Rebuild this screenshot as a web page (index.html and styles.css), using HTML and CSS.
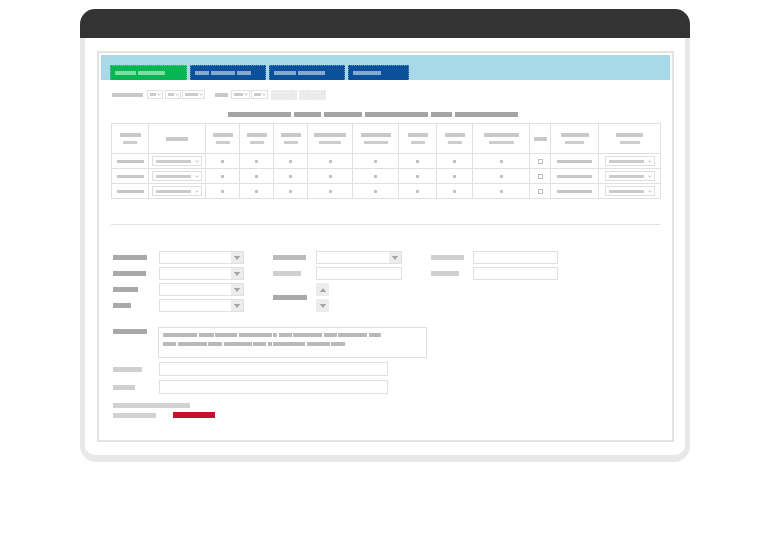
FILE: index.html
```html
<!DOCTYPE html>
<html lang="en">
<head>
<meta charset="utf-8">
<title>Wireframe</title>
<link rel="stylesheet" href="styles.css">
</head>
<body>
<div class="device">
  <div class="device-top"></div>
  <div class="device-body">
    <div class="panel">
      <div class="tabstrip">
        <div class="tab tab-green t1"><span class="tb" style="width:21px"></span><span class="tb" style="width:27px"></span></div>
        <div class="tab tab-blue t2"><span class="tb" style="width:14px"></span><span class="tb" style="width:24px"></span><span class="tb" style="width:14px"></span></div>
        <div class="tab tab-blue t3"><span class="tb" style="width:22px"></span><span class="tb" style="width:27px"></span></div>
        <div class="tab tab-blue t4"><span class="tb" style="width:28px"></span></div>
      </div>

      <div class="content">
        <div class="filters">
          <span class="bar fbar" style="width:31px"></span>
          <span class="msel ms-a" style="width:16px"><span class="mb"></span><svg class="chev" viewBox="0 0 4 3"><polyline points="0.5,0.5 2,2.3 3.5,0.5"/></svg></span>
          <span class="msel ms-b" style="width:16px"><span class="mb"></span><svg class="chev" viewBox="0 0 4 3"><polyline points="0.5,0.5 2,2.3 3.5,0.5"/></svg></span>
          <span class="msel ms-c" style="width:23px"><span class="mb"></span><svg class="chev" viewBox="0 0 4 3"><polyline points="0.5,0.5 2,2.3 3.5,0.5"/></svg></span>
          <span class="bar fbar fgap" style="width:13px"></span>
          <span class="msel ms-b2" style="width:19px"><span class="mb"></span><svg class="chev" viewBox="0 0 4 3"><polyline points="0.5,0.5 2,2.3 3.5,0.5"/></svg></span>
          <span class="msel ms-c" style="width:17px"><span class="mb"></span><svg class="chev" viewBox="0 0 4 3"><polyline points="0.5,0.5 2,2.3 3.5,0.5"/></svg></span>
          <span class="fbtn fb-a" style="width:26px"></span>
          <span class="fbtn fb-b" style="width:27px"></span>
        </div>

        <div class="titles">
          <span class="tbar" style="width:63px"></span>
          <span class="tbar" style="width:27px"></span>
          <span class="tbar" style="width:38px"></span>
          <span class="tbar" style="width:63px"></span>
          <span class="tbar" style="width:21px"></span>
          <span class="tbar" style="width:63px"></span>
        </div>

        <table class="grid">
          <colgroup>
            <col class="k1"><col class="k2"><col class="k3"><col class="k3"><col class="k3"><col class="k6"><col class="k7"><col class="k8"><col class="k9"><col class="k10"><col class="k11"><col class="k12"><col class="k13">
          </colgroup>
          <thead>
            <tr>
              <th><div class="hd"><span class="h1" style="width:21px"></span><span class="h2" style="width:14px"></span></div></th>
              <th><div class="hd"><span class="h1" style="width:22px"></span></div></th>
              <th><div class="hd"><span class="h1" style="width:20px"></span><span class="h2" style="width:14px"></span></div></th>
              <th><div class="hd"><span class="h1" style="width:20px"></span><span class="h2" style="width:14px"></span></div></th>
              <th><div class="hd"><span class="h1" style="width:20px"></span><span class="h2" style="width:14px"></span></div></th>
              <th><div class="hd"><span class="h1" style="width:32px"></span><span class="h2" style="width:22px"></span></div></th>
              <th><div class="hd"><span class="h1" style="width:30px"></span><span class="h2" style="width:24px"></span></div></th>
              <th><div class="hd"><span class="h1" style="width:20px"></span><span class="h2" style="width:14px"></span></div></th>
              <th><div class="hd"><span class="h1" style="width:20px"></span><span class="h2" style="width:14px"></span></div></th>
              <th><div class="hd"><span class="h1" style="width:35px"></span><span class="h2" style="width:25px"></span></div></th>
              <th><div class="hd"><span class="h1" style="width:13px"></span></div></th>
              <th><div class="hd"><span class="h1" style="width:28px"></span><span class="h2" style="width:19px"></span></div></th>
              <th><div class="hd"><span class="h1" style="width:27px"></span><span class="h2" style="width:20px"></span></div></th>
            </tr>
          </thead>
          <tbody>
            <tr>
              <td><span class="rbar"></span></td>
              <td><span class="tsel"><span class="mb"></span><svg class="chev" viewBox="0 0 4 3"><polyline points="0.5,0.5 2,2.3 3.5,0.5"/></svg></span></td>
              <td><span class="dot"></span></td><td><span class="dot"></span></td><td><span class="dot"></span></td><td><span class="dot"></span></td><td><span class="dot"></span></td><td><span class="dot"></span></td><td><span class="dot"></span></td><td><span class="dot"></span></td>
              <td><span class="chk"></span></td>
              <td><span class="rbar rbar-w"></span></td>
              <td><span class="tsel"><span class="mb"></span><svg class="chev" viewBox="0 0 4 3"><polyline points="0.5,0.5 2,2.3 3.5,0.5"/></svg></span></td>
            </tr>
            <tr>
              <td><span class="rbar"></span></td>
              <td><span class="tsel"><span class="mb"></span><svg class="chev" viewBox="0 0 4 3"><polyline points="0.5,0.5 2,2.3 3.5,0.5"/></svg></span></td>
              <td><span class="dot"></span></td><td><span class="dot"></span></td><td><span class="dot"></span></td><td><span class="dot"></span></td><td><span class="dot"></span></td><td><span class="dot"></span></td><td><span class="dot"></span></td><td><span class="dot"></span></td>
              <td><span class="chk"></span></td>
              <td><span class="rbar rbar-w"></span></td>
              <td><span class="tsel"><span class="mb"></span><svg class="chev" viewBox="0 0 4 3"><polyline points="0.5,0.5 2,2.3 3.5,0.5"/></svg></span></td>
            </tr>
            <tr>
              <td><span class="rbar"></span></td>
              <td><span class="tsel"><span class="mb"></span><svg class="chev" viewBox="0 0 4 3"><polyline points="0.5,0.5 2,2.3 3.5,0.5"/></svg></span></td>
              <td><span class="dot"></span></td><td><span class="dot"></span></td><td><span class="dot"></span></td><td><span class="dot"></span></td><td><span class="dot"></span></td><td><span class="dot"></span></td><td><span class="dot"></span></td><td><span class="dot"></span></td>
              <td><span class="chk"></span></td>
              <td><span class="rbar rbar-w"></span></td>
              <td><span class="tsel"><span class="mb"></span><svg class="chev" viewBox="0 0 4 3"><polyline points="0.5,0.5 2,2.3 3.5,0.5"/></svg></span></td>
            </tr>
          </tbody>
        </table>

        <div class="divider"></div>

        <div class="form">
          <div class="fcol fc1">
            <span class="fl dark" style="width:34px"></span>
            <span class="sel"><span class="arr"><svg viewBox="0 0 6 4"><polygon points="0,0 6,0 3,4"/></svg></span></span>
            <span class="fl dark" style="width:33px"></span>
            <span class="sel"><span class="arr"><svg viewBox="0 0 6 4"><polygon points="0,0 6,0 3,4"/></svg></span></span>
            <span class="fl dark" style="width:25px"></span>
            <span class="sel"><span class="arr"><svg viewBox="0 0 6 4"><polygon points="0,0 6,0 3,4"/></svg></span></span>
            <span class="fl dark" style="width:18px"></span>
            <span class="sel"><span class="arr"><svg viewBox="0 0 6 4"><polygon points="0,0 6,0 3,4"/></svg></span></span>
          </div>
          <div class="fcol fc2">
            <span class="fl mid" style="width:33px"></span>
            <span class="sel"><span class="arr"><svg viewBox="0 0 6 4"><polygon points="0,0 6,0 3,4"/></svg></span></span>
            <span class="fl light" style="width:28px"></span>
            <span class="inp"></span>
            <span class="fl dark span2" style="width:34px"></span>
            <span class="spin"><svg viewBox="0 0 6 4"><polygon points="0,4 6,4 3,0"/></svg></span>
            <span class="spin"><svg viewBox="0 0 6 4"><polygon points="0,0 6,0 3,4"/></svg></span>
          </div>
          <div class="fcol fc3">
            <span class="fl light" style="width:33px"></span>
            <span class="inp"></span>
            <span class="fl light" style="width:28px"></span>
            <span class="inp"></span>
          </div>
        </div>

        <div class="trow">
          <span class="fl dark tlabel" style="width:34px"></span>
          <div class="textarea">
            <div class="tline">
              <span class="tx" style="width:34px"></span><span class="tx" style="width:15px"></span><span class="tx" style="width:22px"></span><span class="tx" style="width:33px"></span><span class="tx" style="width:4px"></span><span class="tx" style="width:13px"></span><span class="tx" style="width:29px"></span><span class="tx" style="width:13px"></span><span class="tx" style="width:29px"></span><span class="tx" style="width:12px"></span>
            </div>
            <div class="tline">
              <span class="tx" style="width:13px"></span><span class="tx" style="width:29px"></span><span class="tx" style="width:14px"></span><span class="tx" style="width:28px"></span><span class="tx" style="width:13px"></span><span class="tx" style="width:4px"></span><span class="tx" style="width:32px"></span><span class="tx" style="width:23px"></span><span class="tx" style="width:14px"></span>
            </div>
          </div>
        </div>

        <div class="irow">
          <span class="fl light" style="width:29px"></span>
          <span class="inp wide"></span>
        </div>
        <div class="irow">
          <span class="fl light" style="width:22px"></span>
          <span class="inp wide"></span>
        </div>

        <div class="foot1"></div>
        <div class="foot2">
          <span class="fgray"></span>
          <span class="fred"></span>
        </div>
      </div>
    </div>
  </div>
</div>
</body>
</html>
```

FILE: styles.css
```css
* { box-sizing: border-box; margin: 0; padding: 0; }
html, body { background: #ffffff; }
body { font-family: "Liberation Sans", Arial, sans-serif; }

.device { width: 610px; margin: 9px 0 0 80px; }
.device-top { height: 29px; background: #333333; border-radius: 15px 15px 0 0; }
.device-body {
  border: 5px solid #e8e8e8;
  border-top: 0;
  border-bottom-width: 7px;
  border-radius: 0 0 16px 16px;
  padding: 13px 11px 13px 12px;
}
.panel { border: 2px solid #e3e3e3; padding: 2px; height: 391px; }

/* tabs */
.tabstrip {
  height: 25px;
  background: #a7d9e9;
  display: flex;
  align-items: flex-end;
  gap: 3px;
  padding-left: 9px;
}
.tab {
  height: 15px;
  display: flex;
  align-items: center;
  gap: 2px;
  padding-left: 4px;
  border: 1px dotted rgba(255, 255, 255, 0.35);
  border-bottom: 0;
}
.tab-green { background: #07b553; }
.tab-blue { background: #0b509a; }
.t1 { width: 77px; }
.t2 { width: 76px; }
.t3 { width: 76px; }
.t4 { width: 61px; }
.tb { display: block; height: 4px; background: rgba(255, 255, 255, 0.5); }

.content { padding: 0 10px; }

/* filters */
.filters {
  display: flex;
  align-items: center;
  height: 11px;
  margin-top: 9px;
  padding-left: 1px;
}
.bar { display: block; background: #c9c9c9; }
.fbar { height: 4px; }
.fgap { margin-left: 10px; }
.ms-a { margin-left: 4px; }
.ms-b { margin-left: 2px; }
.ms-c { margin-left: 1px; }
.ms-b2 { margin-left: 3px; }
.fb-a { margin-left: 3px; }
.fb-b { margin-left: 2px; }
.msel {
  height: 9px;
  border: 1px solid #e0e0e0;
  display: flex;
  align-items: center;
  gap: 1px;
  padding: 0 1px 0 2px;
}
.mb { display: block; flex: 1; height: 3px; background: #cccccc; }
.chev { width: 4px; height: 3px; flex: none; }
.chev polyline { fill: none; stroke: #b5b5b5; stroke-width: 0.8; }
.fbtn {
  display: block;
  height: 10px;
  background-color: #ededed;
  background-image: radial-gradient(circle, #dcdcdc 0.7px, transparent 0.8px);
  background-size: 3px 3px;
}

/* titles */
.titles { display: flex; gap: 3px; margin: 12px 0 0 117px; }
.tbar { display: block; height: 5px; background: #a4a4a4; }

/* table */
.grid {
  width: 549px;
  border-collapse: collapse;
  table-layout: fixed;
  margin-top: 6px;
}
.grid th, .grid td {
  border: 1px solid #e0e0e0;
  padding: 0;
  text-align: center;
  vertical-align: middle;
}
.grid thead tr { height: 30px; }
.grid tbody tr { height: 15px; }
.k1 { width: 37px; }
.k2 { width: 57px; }
.k3 { width: 34px; }
.k6 { width: 45px; }
.k7 { width: 46px; }
.k8 { width: 38px; }
.k9 { width: 36px; }
.k10 { width: 57px; }
.k11 { width: 21px; }
.k12 { width: 48px; }
.k13 { width: 62px; }
.hd { display: flex; flex-direction: column; align-items: center; gap: 4px; }
.h1 { display: block; height: 4px; background: #c9c9c9; }
.h2 { display: block; height: 3px; background: #cdcdcd; }
.dot { display: block; width: 3px; height: 3px; background: #c2c2c2; margin: 0 auto; }
.chk { display: block; width: 5px; height: 5px; border: 1px solid #bdbdbd; margin: 0 auto; }
.rbar { display: block; width: 27px; height: 3px; background: #c6c6c6; margin: 0 auto; }
.rbar-w { width: 35px; }
.tsel {
  width: 50px;
  height: 10px;
  margin: 0 auto;
  border: 1px solid #dedede;
  display: flex;
  align-items: center;
  gap: 4px;
  padding: 0 2px 0 3px;
}

.divider { height: 1px; background: #e3e3e3; margin-top: 25px; }

/* form */
.form { display: flex; gap: 29px; margin: 26px 0 0 2px; }
.fcol { display: grid; grid-auto-rows: 13px; row-gap: 3px; }
.fc1 { grid-template-columns: 46px 85px; }
.fc2 { grid-template-columns: 43px 86px; }
.fc3 { grid-template-columns: 42px 85px; }
.fl { display: block; height: 5px; align-self: center; }
.dark { background: #a9a9a9; }
.mid { background: #bcbcbc; }
.light { background: #d0d0d0; }
.span2 { grid-row: span 2; }
.sel {
  display: flex;
  justify-content: flex-end;
  border: 1px solid #e0e0e0;
  background: #fff;
}
.arr {
  width: 12px;
  background: #ececec;
  display: flex;
  align-items: center;
  justify-content: center;
}
.arr svg, .spin svg { width: 6px; height: 4px; }
.arr polygon, .spin polygon { fill: #a3a3a3; }
.inp { display: block; border: 1px solid #e0e0e0; background: #fff; }
.spin {
  width: 13px;
  background: #ececec;
  display: flex;
  align-items: center;
  justify-content: center;
}

/* textarea */
.trow { display: flex; margin: 15px 0 0 2px; }
.tlabel { align-self: flex-start; margin: 2px 11px 0 0; }
.textarea {
  width: 269px;
  height: 31px;
  border: 1px solid #dedede;
  padding: 5px 4px;
  display: flex;
  flex-direction: column;
  gap: 5px;
}
.tline { display: flex; gap: 1.5px; }
.tx { display: block; height: 4px; background: #b9b9b9; }

.irow { display: flex; align-items: center; width: 275px; margin: 4px 0 0 2px; }
.irow .fl { margin-right: auto; }
.inp.wide { width: 229px; height: 14px; }

.foot1 { width: 77px; height: 5px; background: #d2d2d2; margin: 9px 0 0 2px; }
.foot2 { display: flex; align-items: center; gap: 17px; margin: 4px 0 0 2px; }
.fgray { display: block; width: 43px; height: 5px; background: #d2d2d2; }
.fred { display: block; width: 42px; height: 6px; background: #c8102e; }
```
